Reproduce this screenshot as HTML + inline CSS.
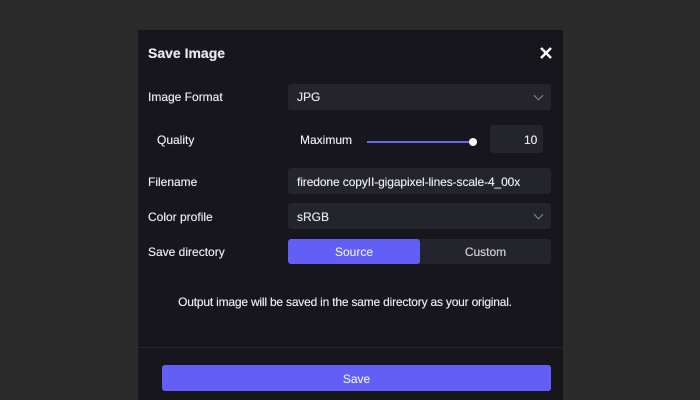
<html><head><style>
body{margin:0;width:700px;height:400px;background:#2b2b2b;font-family:"Liberation Sans",sans-serif;position:relative;overflow:hidden;color:#e8e8ee}
.d{position:absolute;left:138px;top:30px;width:425px;height:370px;background:#16161c}
.a{position:absolute;font-size:12px;text-shadow:0 0 0.4px #e8e8ee}
.box{position:absolute;background:#23242c;border-radius:3px}
.chev{position:absolute;width:6px;height:6px;border-right:1px solid #888;border-bottom:1px solid #888;transform:rotate(45deg)}
</style></head><body>
<div class="d"></div>
<div class="a" style="left:148px;top:45px;font-size:14px;font-weight:bold">Save Image</div>
<svg style="position:absolute;left:540px;top:47px" width="12" height="12"><path d="M1 1L11 11M11 1L1 11" stroke="#fff" stroke-width="2.4"/></svg>
<div class="a" style="left:148px;top:90px">Image Format</div>
<div class="box" style="left:288px;top:84px;width:263px;height:26px"></div>
<div class="a" style="left:297px;top:90px">JPG</div>
<div class="chev" style="left:535px;top:92px"></div>
<div class="a" style="left:157px;top:133px">Quality</div>
<div class="a" style="left:300px;top:133px">Maximum</div>
<div style="position:absolute;left:367px;top:141px;width:106px;height:2px;background:#6a66f0"></div>
<div style="position:absolute;left:469px;top:138px;width:8px;height:8px;border-radius:50%;background:#fff"></div>
<div class="box" style="left:490px;top:125px;width:53px;height:28px"></div>
<div class="a" style="left:524px;top:133px">10</div>
<div class="a" style="left:148px;top:175px">Filename</div>
<div class="box" style="left:288px;top:168px;width:263px;height:26px"></div>
<div class="a" style="left:297px;top:175px;letter-spacing:-0.1px">firedone copyII-gigapixel-lines-scale-4_00x</div>
<div class="a" style="left:148px;top:210px">Color profile</div>
<div class="box" style="left:288px;top:203px;width:263px;height:26px"></div>
<div class="a" style="left:297px;top:210px">sRGB</div>
<div class="chev" style="left:535px;top:211px"></div>
<div class="a" style="left:148px;top:245px">Save directory</div>
<div class="box" style="left:288px;top:239px;width:263px;height:25px"></div>
<div class="box" style="left:288px;top:239px;width:132px;height:25px;background:#625ff6"></div>
<div class="a" style="left:288px;top:245px;width:132px;text-align:center">Source</div>
<div class="a" style="left:420px;top:245px;width:131px;text-align:center;color:#ccc">Custom</div>
<div class="a" style="left:138px;top:295px;width:414px;text-align:center;letter-spacing:-0.2px">Output image will be saved in the same directory as your original.</div>
<div style="position:absolute;left:138px;top:347px;width:425px;height:1px;background:#24252c"></div>
<div class="box" style="left:162px;top:365px;width:389px;height:26px;background:#625ff6"></div>
<div class="a" style="left:162px;top:372px;width:389px;text-align:center">Save</div>
</body></html>
